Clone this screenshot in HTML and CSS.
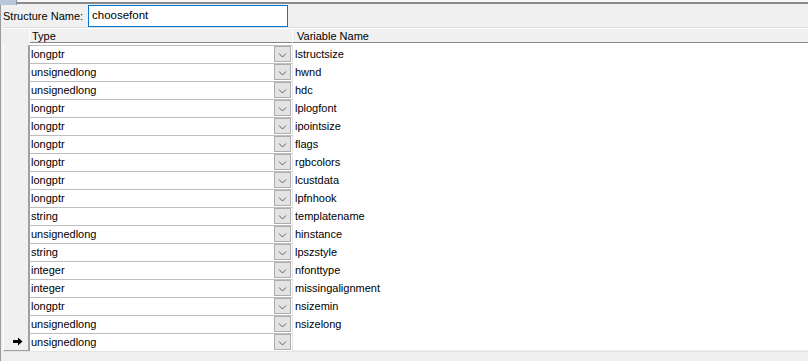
FILE: index.html
```
<!DOCTYPE html>
<html>
<head>
<meta charset="utf-8">
<link rel="stylesheet" href="styles.css">
</head>
<body>
<div class="top"><div class="tab"></div><div class="topline"></div></div>
<div class="main">
  <div class="namebar">
    <span class="label">Structure Name:</span>
    <div class="input">choosefont</div>
  </div>
  <div class="grid head">
    <div class="corner"></div>
    <div class="hcell htype">Type</div>
    <div class="hcell hvar">Variable Name</div>
  </div>
  <div class="rows">
    <div class="grid row"><div class="rh"></div><div class="tc"><span class="tt">longptr</span><span class="dd"><svg width="9" height="5" viewBox="0 0 9 5"><path d="M1 0.5 L4.5 4 L8 0.5" fill="none" stroke="#606060" stroke-width="1"/></svg></span></div><div class="vc">lstructsize</div></div>
    <div class="grid row"><div class="rh"></div><div class="tc"><span class="tt">unsignedlong</span><span class="dd"><svg width="9" height="5" viewBox="0 0 9 5"><path d="M1 0.5 L4.5 4 L8 0.5" fill="none" stroke="#606060" stroke-width="1"/></svg></span></div><div class="vc">hwnd</div></div>
    <div class="grid row"><div class="rh"></div><div class="tc"><span class="tt">unsignedlong</span><span class="dd"><svg width="9" height="5" viewBox="0 0 9 5"><path d="M1 0.5 L4.5 4 L8 0.5" fill="none" stroke="#606060" stroke-width="1"/></svg></span></div><div class="vc">hdc</div></div>
    <div class="grid row"><div class="rh"></div><div class="tc"><span class="tt">longptr</span><span class="dd"><svg width="9" height="5" viewBox="0 0 9 5"><path d="M1 0.5 L4.5 4 L8 0.5" fill="none" stroke="#606060" stroke-width="1"/></svg></span></div><div class="vc">lplogfont</div></div>
    <div class="grid row"><div class="rh"></div><div class="tc"><span class="tt">longptr</span><span class="dd"><svg width="9" height="5" viewBox="0 0 9 5"><path d="M1 0.5 L4.5 4 L8 0.5" fill="none" stroke="#606060" stroke-width="1"/></svg></span></div><div class="vc">ipointsize</div></div>
    <div class="grid row"><div class="rh"></div><div class="tc"><span class="tt">longptr</span><span class="dd"><svg width="9" height="5" viewBox="0 0 9 5"><path d="M1 0.5 L4.5 4 L8 0.5" fill="none" stroke="#606060" stroke-width="1"/></svg></span></div><div class="vc">flags</div></div>
    <div class="grid row"><div class="rh"></div><div class="tc"><span class="tt">longptr</span><span class="dd"><svg width="9" height="5" viewBox="0 0 9 5"><path d="M1 0.5 L4.5 4 L8 0.5" fill="none" stroke="#606060" stroke-width="1"/></svg></span></div><div class="vc">rgbcolors</div></div>
    <div class="grid row"><div class="rh"></div><div class="tc"><span class="tt">longptr</span><span class="dd"><svg width="9" height="5" viewBox="0 0 9 5"><path d="M1 0.5 L4.5 4 L8 0.5" fill="none" stroke="#606060" stroke-width="1"/></svg></span></div><div class="vc">lcustdata</div></div>
    <div class="grid row"><div class="rh"></div><div class="tc"><span class="tt">longptr</span><span class="dd"><svg width="9" height="5" viewBox="0 0 9 5"><path d="M1 0.5 L4.5 4 L8 0.5" fill="none" stroke="#606060" stroke-width="1"/></svg></span></div><div class="vc">lpfnhook</div></div>
    <div class="grid row"><div class="rh"></div><div class="tc"><span class="tt">string</span><span class="dd"><svg width="9" height="5" viewBox="0 0 9 5"><path d="M1 0.5 L4.5 4 L8 0.5" fill="none" stroke="#606060" stroke-width="1"/></svg></span></div><div class="vc">templatename</div></div>
    <div class="grid row"><div class="rh"></div><div class="tc"><span class="tt">unsignedlong</span><span class="dd"><svg width="9" height="5" viewBox="0 0 9 5"><path d="M1 0.5 L4.5 4 L8 0.5" fill="none" stroke="#606060" stroke-width="1"/></svg></span></div><div class="vc">hinstance</div></div>
    <div class="grid row"><div class="rh"></div><div class="tc"><span class="tt">string</span><span class="dd"><svg width="9" height="5" viewBox="0 0 9 5"><path d="M1 0.5 L4.5 4 L8 0.5" fill="none" stroke="#606060" stroke-width="1"/></svg></span></div><div class="vc">lpszstyle</div></div>
    <div class="grid row"><div class="rh"></div><div class="tc"><span class="tt">integer</span><span class="dd"><svg width="9" height="5" viewBox="0 0 9 5"><path d="M1 0.5 L4.5 4 L8 0.5" fill="none" stroke="#606060" stroke-width="1"/></svg></span></div><div class="vc">nfonttype</div></div>
    <div class="grid row"><div class="rh"></div><div class="tc"><span class="tt">integer</span><span class="dd"><svg width="9" height="5" viewBox="0 0 9 5"><path d="M1 0.5 L4.5 4 L8 0.5" fill="none" stroke="#606060" stroke-width="1"/></svg></span></div><div class="vc">missingalignment</div></div>
    <div class="grid row"><div class="rh"></div><div class="tc"><span class="tt">longptr</span><span class="dd"><svg width="9" height="5" viewBox="0 0 9 5"><path d="M1 0.5 L4.5 4 L8 0.5" fill="none" stroke="#606060" stroke-width="1"/></svg></span></div><div class="vc">nsizemin</div></div>
    <div class="grid row"><div class="rh"></div><div class="tc"><span class="tt">unsignedlong</span><span class="dd"><svg width="9" height="5" viewBox="0 0 9 5"><path d="M1 0.5 L4.5 4 L8 0.5" fill="none" stroke="#606060" stroke-width="1"/></svg></span></div><div class="vc">nsizelong</div></div>
    <div class="grid row"><div class="rh"><svg class="arrow" width="10" height="9" viewBox="0 0 10 9"><path d="M0 3 H5 V0.5 L9.5 4.5 L5 8.5 V6 H0 Z" fill="#000"/></svg></div><div class="tc"><span class="tt">unsignedlong</span><span class="dd"><svg width="9" height="5" viewBox="0 0 9 5"><path d="M1 0.5 L4.5 4 L8 0.5" fill="none" stroke="#606060" stroke-width="1"/></svg></span></div><div class="vc"></div></div>
  </div>
  <div class="footer"></div>
</div>
</body>
</html>
```
FILE: styles.css
```
* { box-sizing: border-box; }
html, body { margin: 0; padding: 0; }
body {
  width: 808px;
  height: 361px;
  overflow: hidden;
  background: #f0f0f0;
  font-family: "Liberation Sans", Arial, sans-serif;
  font-size: 11px;
  color: #000;
}
.top {
  display: flex;
  height: 4px;
  background: #f7f7f7;
}
.tab {
  width: 17px;
  height: 5px;
  background: #b7c7d9;
  border-right: 1px solid #8797aa;
  position: relative;
  z-index: 1;
}
.topline {
  flex: 1;
  margin-top: 2px;
  height: 2px;
  background: #8a8a8a;
}
.main {
  height: 357px;
  border-left: 1px solid #9c9c9c;
  padding-left: 2px;
  display: flex;
  flex-direction: column;
  background: #f0f0f0;
}
.namebar {
  height: 24px;
  display: grid;
  grid-template-columns: 85px 200px;
  align-items: center;
  border-bottom: 1px solid #dcdcdc;
}
.label { padding-top: 1px; }
.input {
  height: 22px;
  margin-top: 0;
  border: 1px solid #0078d7;
  background: #fff;
  padding-left: 3px;
  line-height: 19px;
  font-size: 11.5px;
}
.grid {
  display: grid;
  grid-template-columns: 26px 263px 1fr;
}
.head {
  border-top: 1px solid #fff;
  height: 15px;
}
.corner { background: #f0f0f0; }
.hcell {
  border-left: 1px solid #fff;
  border-bottom: 2px solid #868686;
  padding-top: 1px;
  line-height: 12px;
  background: #f0f0f0;
}
.htype { padding-left: 2px; }
.hvar { padding-left: 4px; }
.rows {
  padding-top: 2px;
  background: linear-gradient(to right, #f0f0f0 26px, #fff 26px);
}
.row { height: 18px; }
.rh {
  background: #f0f0f0;
  border-left: 1px solid #fff;
  border-right: 1px solid #a0a0a0;
  border-bottom: 1px solid #a0a0a0;
  display: flex;
  align-items: center;
  justify-content: center;
}
.arrow { display: block; margin-left: 3px; }
.tc {
  background: #fff;
  border-left: 1px solid #a0a0a0;
  border-top: 1px solid #bdbdbd;
  display: flex;
  align-items: flex-start;
}
.tt {
  flex: 1;
  padding-left: 1px;
  line-height: 16px;
}
.dd {
  width: 17px;
  height: 16px;
  margin-right: 1px;
  background: #e3e3e3;
  border: 1px solid #adadad;
  display: flex;
  align-items: center;
  justify-content: center;
  padding-top: 2px;
}
.dd svg { display: block; }
.vc {
  background: #fff;
  border-left: 1px solid #e6e6e6;
  border-bottom: 1px solid #ececec;
  padding-left: 2px;
  line-height: 18px;
}
.footer {
  flex: 1;
  border-top: 1px solid #e3e3e3;
  background: #f0f0f0;
}
```
